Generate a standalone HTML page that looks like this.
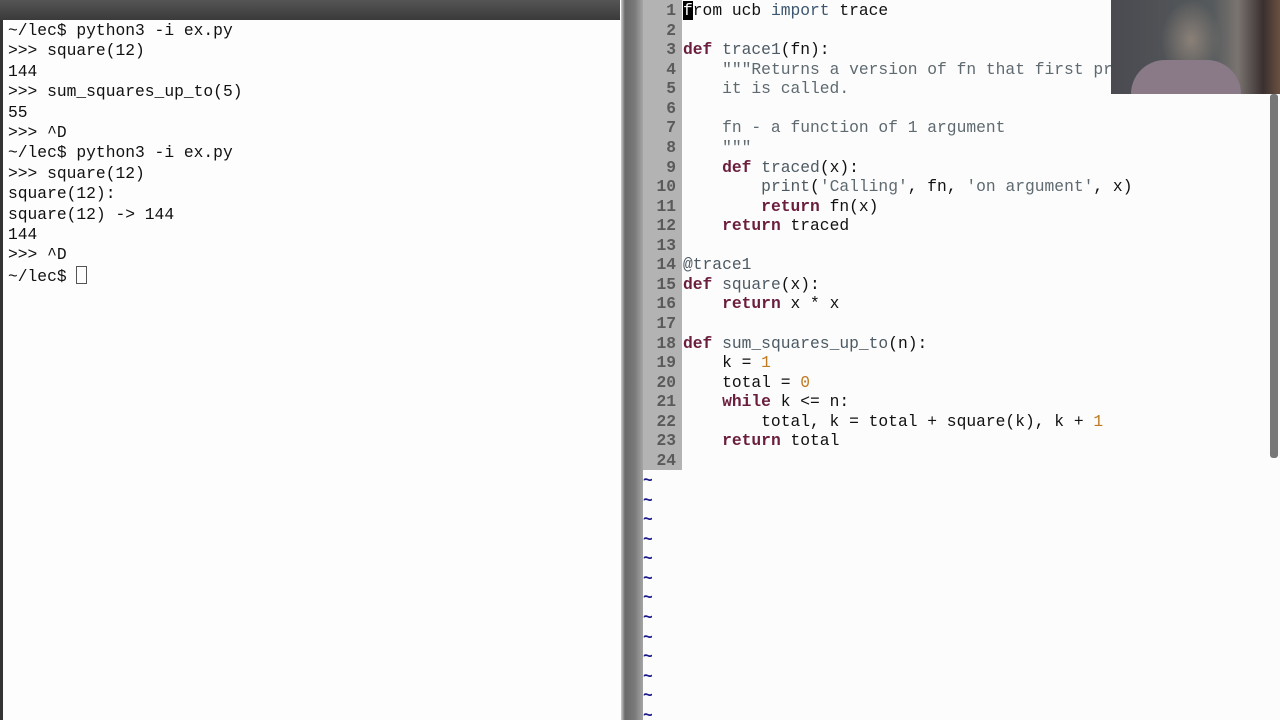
<!DOCTYPE html>
<html><head><meta charset="utf-8"><style>
body{margin:0;width:1280px;height:720px;overflow:hidden;background:#fff;position:relative;font-family:"Liberation Mono","DejaVu Sans Mono",monospace;}
#topbar{position:absolute;left:0;top:0;width:620px;height:20px;background:linear-gradient(#555,#3a3a3a);}
#term{position:absolute;left:0;top:20px;width:621px;height:700px;background:#fdfdfd;border-left:3px solid #333;box-sizing:border-box;}
#term pre{margin:0;position:absolute;left:5px;top:1px;font-size:16.3px;line-height:20.4px;color:#111;font-family:inherit;}
#gap{position:absolute;left:621px;top:0;width:22px;height:720px;background:linear-gradient(90deg,#ccc 0,#6a6a6a 4px,#7a7a7a 14px,#a5a5a5 22px);}
#ed{position:absolute;left:643px;top:0;width:637px;height:720px;background:#fcfcfc;}
#gut{position:absolute;left:0;top:0;width:39px;height:470px;background:#b3b3b3;}
#gut pre{margin:0;margin-top:1px;text-align:right;padding-right:6px;font-size:16.3px;line-height:19.57px;color:#5a5a5a;font-weight:bold;font-family:inherit;}
#code{margin:0;position:absolute;left:40px;top:1px;font-size:16.3px;line-height:19.57px;color:#111;font-family:inherit;}
#tilde{margin:0;position:absolute;left:0;top:471px;font-size:16.3px;line-height:19.57px;color:#1a1a8a;font-weight:bold;font-family:inherit;}
.k{color:#6a1d3c;font-weight:bold}.i{color:#3b5670}.f{color:#4d5a63}.s{color:#5e6a70}.n{color:#c07a20}
#cam{position:absolute;left:1111px;top:0;width:169px;height:94px;background:radial-gradient(ellipse 30px 40px at 80px 40px,#8a8078,transparent),linear-gradient(90deg,#4a4a50 0,#555a5c 60%,#7a7470 75%,#3a3030 90%,#6a5040);}
#cam:after{content:"";position:absolute;left:20px;top:60px;width:110px;height:34px;background:#8a7a88;border-radius:40px 40px 0 0;}
#sb{position:absolute;left:1270px;top:94px;width:8px;height:364px;background:#777;border-radius:3px;}
.cur{background:#000;color:#fff}
</style></head><body>
<div id="topbar"></div>
<div id="term"><pre>~/lec$ python3 -i ex.py
&gt;&gt;&gt; square(12)
144
&gt;&gt;&gt; sum_squares_up_to(5)
55
&gt;&gt;&gt; ^D
~/lec$ python3 -i ex.py
&gt;&gt;&gt; square(12)
square(12):
square(12) -&gt; 144
144
&gt;&gt;&gt; ^D
~/lec$ <span style="display:inline-block;width:9px;height:16px;border:1px solid #555;vertical-align:-3px"></span></pre></div>
<div id="gap"></div>
<div id="ed">
<div id="gut"><pre>1
2
3
4
5
6
7
8
9
10
11
12
13
14
15
16
17
18
19
20
21
22
23
24</pre></div>
<pre id="code"><span class="cur">f</span>rom ucb <span class="i">import</span> trace

<span class="k">def</span> <span class="f">trace1</span>(fn):
    <span class="s">"""Returns a version of fn that first pr</span>
<span class="s">    it is called.</span>

<span class="s">    fn - a function of 1 argument</span>
<span class="s">    """</span>
    <span class="k">def</span> <span class="f">traced</span>(x):
        <span class="f">print</span>(<span class="s">'Calling'</span>, fn, <span class="s">'on argument'</span>, x)
        <span class="k">return</span> fn(x)
    <span class="k">return</span> traced

<span class="f">@trace1</span>
<span class="k">def</span> <span class="f">square</span>(x):
    <span class="k">return</span> x * x

<span class="k">def</span> <span class="f">sum_squares_up_to</span>(n):
    k = <span class="n">1</span>
    total = <span class="n">0</span>
    <span class="k">while</span> k &lt;= n:
        total, k = total + square(k), k + <span class="n">1</span>
    <span class="k">return</span> total
</pre>
<pre id="tilde">~
~
~
~
~
~
~
~
~
~
~
~
~</pre>
</div>
<div id="cam"></div>
<div id="sb"></div>
</body></html>
